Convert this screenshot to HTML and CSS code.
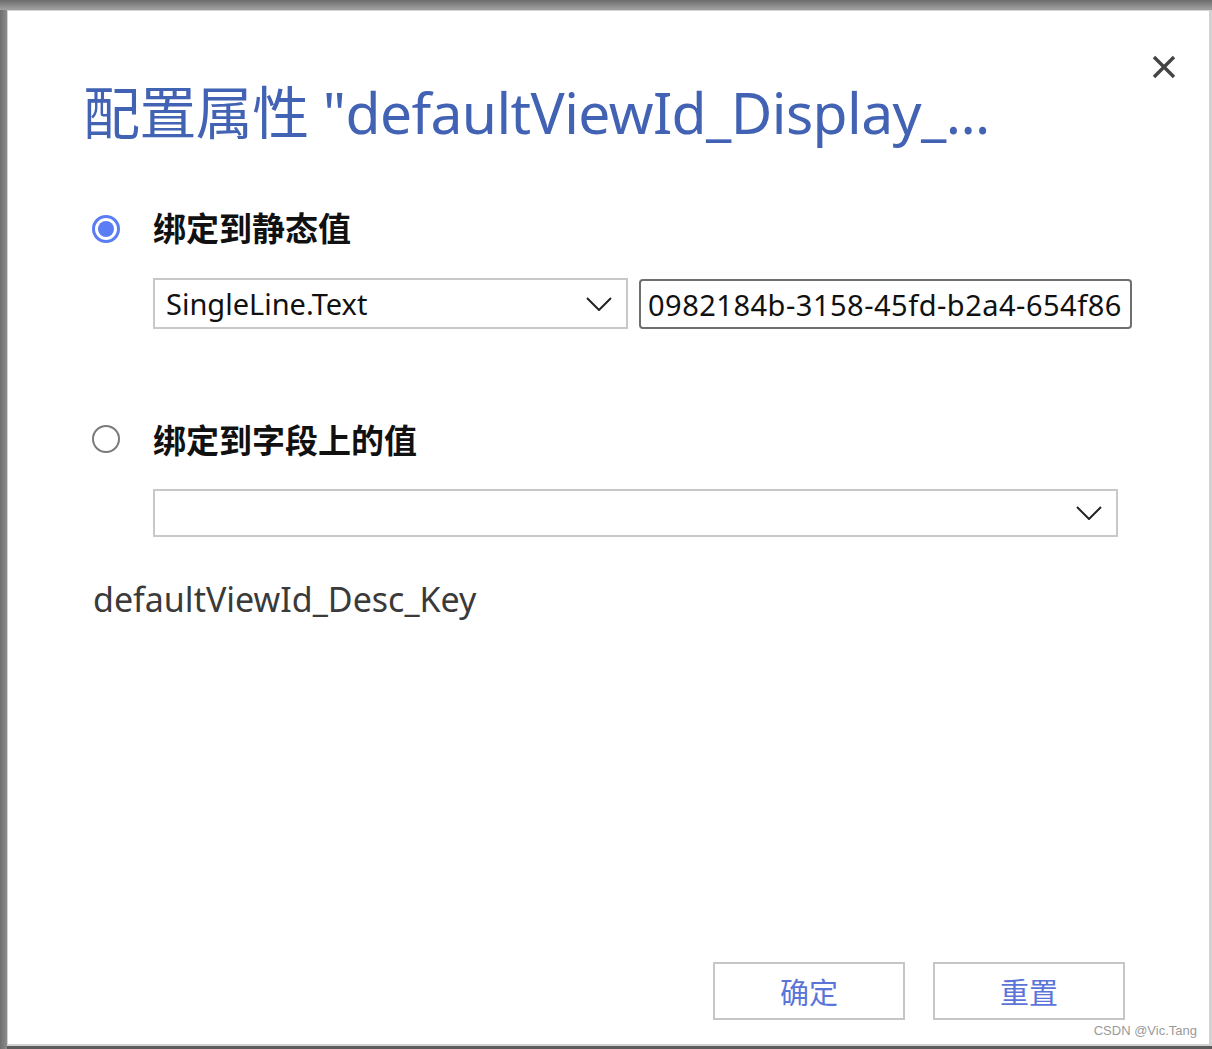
FILE: index.html
```html
<!DOCTYPE html>
<html lang="zh">
<head>
<meta charset="utf-8">
<title>配置属性</title>
<link rel="stylesheet" href="styles.css">
</head>
<body>
<div class="frame">
  <div class="dialog">
    <div class="header">
      <h1 class="title">配置属性 "defaultViewId_Display_...</h1>
      <button class="close" aria-label="关闭">
        <svg viewBox="0 0 24 24" width="24" height="24"><path d="M2 2 L22 22 M22 2 L2 22" stroke="#444" stroke-width="3.4" fill="none"/></svg>
      </button>
    </div>

    <div class="option option-first">
      <span class="radio checked"><span class="dot"></span></span>
      <span class="label">绑定到静态值</span>
    </div>
    <div class="fields">
      <div class="select select-type">
        <span class="select-text">SingleLine.Text</span>
        <svg class="chev" viewBox="0 0 26 14" width="26" height="14"><path d="M1 1 L13 13 L25 1" stroke="#222" stroke-width="2" fill="none"/></svg>
      </div>
      <div class="textbox"><span class="textbox-text">0982184b-3158-45fd-b2a4-654f86</span></div>
    </div>

    <div class="option option-second">
      <span class="radio"></span>
      <span class="label">绑定到字段上的值</span>
    </div>
    <div class="fields">
      <div class="select select-field">
        <span class="select-text"></span>
        <svg class="chev" viewBox="0 0 26 14" width="26" height="14"><path d="M1 1 L13 13 L25 1" stroke="#222" stroke-width="2" fill="none"/></svg>
      </div>
    </div>

    <p class="desc">defaultViewId_Desc_Key</p>

    <div class="actions">
      <button class="btn">确定</button>
      <button class="btn">重置</button>
    </div>
    <div class="watermark">CSDN @Vic.Tang</div>
  </div>
</div>
</body>
</html>
```
FILE: styles.css
```css
html, body {
  margin: 0;
  padding: 0;
}
body {
  width: 1212px;
  height: 1049px;
  overflow: hidden;
  background: #6f6f6f;
  font-family: "Noto Sans", "Noto Sans CJK SC", sans-serif;
}
.frame {
  height: 1049px;
  box-sizing: border-box;
  padding: 10px 0 3px 7px;
  background:
    linear-gradient(to bottom, #6c6c6c 0px, #a2a2a2 10px, transparent 10px),
    linear-gradient(to right, #6e6e6e 0px, #8c8c8c 7px, transparent 7px),
    #5c5c5c;
}
.dialog {
  position: relative;
  height: 100%;
  box-sizing: border-box;
  background: #fff;
  border: 1px solid #d2d2d2;
  border-right-width: 3px;
  border-bottom-width: 2px;
  display: flex;
  flex-direction: column;
}
.header {
  display: flex;
  align-items: flex-start;
  justify-content: space-between;
  padding: 0 32px 0 75px;
}
.title {
  margin: 68px 0 0 0;
  font-family: "Noto Sans", "Noto Sans CJK SC", sans-serif;
  font-weight: 400;
  font-size: 57px;
  line-height: 66px;
  color: #4262b4;
  letter-spacing: -0.6px;
  white-space: nowrap;
}
.close {
  margin-top: 44px;
  margin-right: 1px;
  padding: 0;
  border: 0;
  background: transparent;
  width: 24px;
  height: 24px;
}
.close svg { display: block; }

.option {
  display: flex;
  align-items: center;
  padding-left: 84px;
  height: 40px;
}
.option-first { margin-top: 62px; }
.option-second { margin-top: 90px; }
.radio {
  width: 28px;
  height: 28px;
  box-sizing: border-box;
  border: 2px solid #7a7a7a;
  border-radius: 50%;
  display: flex;
  align-items: center;
  justify-content: center;
  margin-right: 33px;
  flex: none;
}
.option-first .radio { margin-top: 4px; }
.radio.checked {
  border: 3px solid #5a7cf5;
}
.radio .dot {
  width: 16px;
  height: 16px;
  border-radius: 50%;
  background: #5a7cf5;
}
.label {
  font-family: "Noto Sans CJK SC", sans-serif;
  font-weight: 700;
  font-size: 33px;
  color: #111;
  line-height: 40px;
}
.fields {
  display: flex;
  gap: 11px;
  padding-left: 145px;
  margin-top: 31px;
}
.option-second + .fields { margin-top: 30px; }
.select {
  box-sizing: border-box;
  border: 2px solid #c8c8c8;
  display: flex;
  align-items: center;
  justify-content: space-between;
  padding: 0 14px 0 11px;
  background: #fff;
}
.select-type {
  width: 475px;
  height: 51px;
}
.select-field {
  width: 965px;
  height: 48px;
}
.select-text, .textbox-text {
  font-size: 29px;
  color: #111;
  white-space: nowrap;
}
.textbox-text { letter-spacing: 0.5px; }
.chev { display: block; flex: none; }
.textbox {
  box-sizing: border-box;
  width: 493px;
  height: 50px;
  margin-top: 1px;
  border: 2px solid #6e6e6e;
  border-radius: 4px;
  overflow: hidden;
  display: flex;
  align-items: center;
  padding-left: 7px;
}
.desc {
  margin: 40px 0 0 85px;
  font-size: 34px;
  line-height: 44px;
  color: #3a3a3a;
}
.actions {
  margin-top: auto;
  display: flex;
  justify-content: flex-end;
  gap: 28px;
  padding-right: 84px;
}
.btn {
  width: 192px;
  height: 58px;
  box-sizing: border-box;
  border: 2px solid #c6c6c6;
  background: #fff;
  color: #5b74d8;
  font-family: "Noto Sans CJK SC", sans-serif;
  font-size: 29px;
  padding: 0;
}
.watermark {
  align-self: flex-end;
  margin: 3px 12px 6px 0;
  font-family: "Liberation Sans", sans-serif;
  font-size: 13px;
  line-height: 15px;
  color: #9a9a9a;
}
```
